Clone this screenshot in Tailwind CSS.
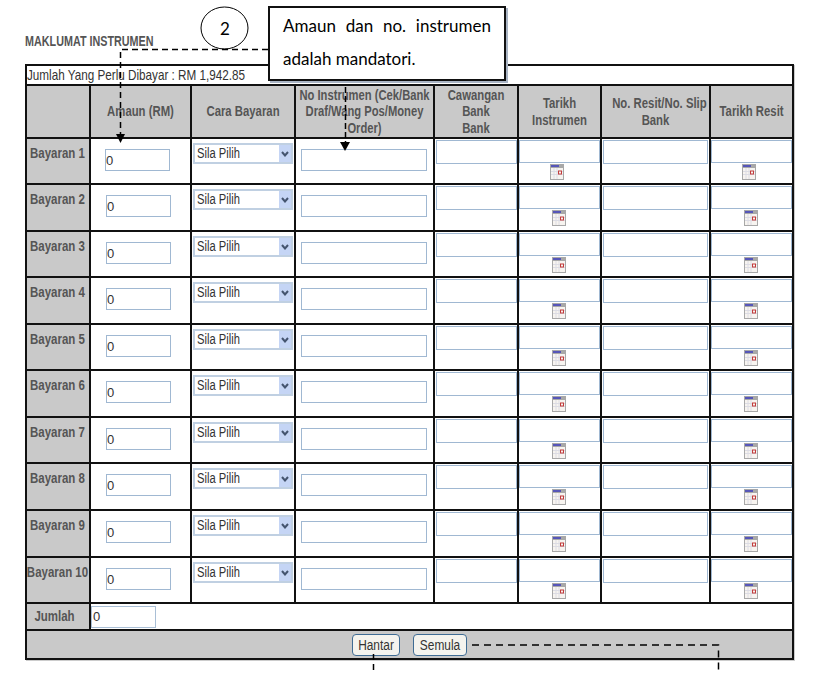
<!DOCTYPE html>
<html lang="en">
<head>
    <meta charset="UTF-8">
    <title>Maklumat Instrumen</title>
    <script src="https://cdn.jsdelivr.net/npm/@tailwindcss/browser@4"></script>
</head>
<body class="bg-white font-['Liberation_Sans',sans-serif] text-[#4a4a4a]">
    <main class="relative w-[821px] h-[673px] overflow-hidden pl-[25px] pt-[33px]">
        <h1 class="h-[31px] text-[14px] leading-[16px] font-bold text-[#555] whitespace-nowrap origin-left scale-x-[.77]">MAKLUMAT INSTRUMEN</h1>

        <table class="table-fixed border-collapse w-[767px] border-2 border-[#111] text-[14px] shadow-[1px_1px_0_#ccc]">
            <colgroup>
                <col class="w-[64px]"><col class="w-[101px]"><col class="w-[104px]"><col class="w-[139px]">
                <col class="w-[84px]"><col class="w-[83px]"><col class="w-[109px]"><col class="w-[83px]">
            </colgroup>
            <thead>
                <tr class="h-[20px]">
                    <td colspan="8" class="border-2 border-[#111] text-[15px] leading-[18px] text-[#333]">
                        <span class="block whitespace-nowrap origin-left scale-x-[.78]">Jumlah Yang Perlu Dibayar : RM 1,942.85</span>
                    </td>
                </tr>
                <tr class="h-[53px] bg-[#c9c9c9] text-center font-bold leading-[16.5px] text-[#555]">
                    <th class="border-2 border-[#111]"></th>
                    <th class="border-2 border-[#111]"><span class="block whitespace-nowrap scale-x-[.81]">Amaun (RM)</span></th>
                    <th class="border-2 border-[#111]"><span class="block whitespace-nowrap scale-x-[.81]">Cara Bayaran</span></th>
                    <th class="border-2 border-[#111]"><span class="block -mx-[20px] whitespace-nowrap scale-x-[.8]">No Instrumen (Cek/Bank<br>Draf/Wang Pos/Money<br>Order)</span></th>
                    <th class="border-2 border-[#111]"><span class="block whitespace-nowrap scale-x-[.81]">Cawangan<br>Bank<br>Bank</span></th>
                    <th class="border-2 border-[#111]"><span class="block whitespace-nowrap scale-x-[.81]">Tarikh<br>Instrumen</span></th>
                    <th class="border-2 border-[#111]"><span class="block whitespace-nowrap scale-x-[.81]">No. Resit/No. Slip<br>Bank</span></th>
                    <th class="border-2 border-[#111]"><span class="block whitespace-nowrap scale-x-[.81]">Tarikh Resit</span></th>
                </tr>
            </thead>
            <tbody id="rows"></tbody>
            <tfoot>
                <tr class="h-[27px]">
                    <td class="border-2 border-[#111] bg-[#c9c9c9] pr-[7px] text-center font-bold text-[#555]"><span class="block whitespace-nowrap scale-x-[.82]">Jumlah</span></td>
                    <td colspan="7" class="border-2 border-[#111]">
                        <input value="0" class="block w-[65px] h-[22px] border border-[#a9bfd6] px-[1px] text-[13px] text-[#333] outline-none">
                    </td>
                </tr>
                <tr class="h-[29px] bg-[#c9c9c9]">
                    <td colspan="8" class="border-2 border-[#111]">
                        <div class="flex justify-center gap-[13px] pr-[1px]">
                            <button class="w-[48px] h-[22px] rounded-[4px] border border-[#3f6c94] bg-[#f4f3ee] text-[14px] text-[#333]"><span class="block scale-x-[.85]">Hantar</span></button>
                            <button class="w-[54px] h-[22px] rounded-[4px] border border-[#3f6c94] bg-[#f4f3ee] text-[14px] text-[#333]"><span class="block scale-x-[.85]">Semula</span></button>
                        </div>
                    </td>
                </tr>
            </tfoot>
        </table>

        <!-- Annotations drawn over the form -->
        <svg class="absolute left-0 top-0 pointer-events-none" width="821" height="673" fill="none" stroke="#000">
            <ellipse cx="224.5" cy="28" rx="23.5" ry="21" stroke-width="1"/>
            <path d="M268 49.5H120.5V134" stroke-width="1.5" stroke-dasharray="6 4"/>
            <path d="M345.5 87V142" stroke-width="1.5" stroke-dasharray="6 3"/>
            <path d="M373.5 654V673" stroke-width="1.5" stroke-dasharray="6 4"/>
            <path d="M472 645H718.5V673" stroke-width="1.5" stroke-dasharray="7 5"/>
            <path d="M116 134H125L120.5 143Z" fill="#000" stroke="none"/>
            <path d="M340 142H350L345 151Z" fill="#000" stroke="none"/>
        </svg>
        <span class="absolute left-[220px] top-[19px] font-['Lato',sans-serif] text-[17px] leading-[20px] font-normal text-black">2</span>
        <div class="absolute left-[268px] top-[6px] w-[238px] h-[75px] border-2 border-[#111] bg-white px-[13px] pt-[1px] font-['Lato',sans-serif] text-[17px] leading-[33px] text-black shadow-[2px_2px_0_#a9b4c4]">
            <p class="flex justify-between"><span>Amaun</span><span>dan</span><span>no.</span><span>instrumen</span></p>
            <p>adalah mandatori.</p>
        </div>
    </main>

    <script>
        document.addEventListener('DOMContentLoaded', () => {
            const rows = document.getElementById('rows');
            const heights = [46, 47, 46, 47, 46, 47, 46, 47, 47, 46];
            const field = 'block border-[1.5px] border-[#a0b8d2] bg-white outline-none';
            const cell = 'border-2 border-[#111] align-top';

            const calendar = (left) => `
                <svg class="absolute top-[25px]" style="left:${left}px" width="14" height="16" viewBox="0 0 14 16">
                    <rect width="14" height="16" fill="#a8a8a8"/>
                    <rect x="1" y="4" width="12" height="11" fill="#f7f4f0"/>
                    <rect x="1" y="1" width="8" height="2" fill="#5656b8"/>
                    <path d="M1 7.5H13M1 10.5H13M4 4V15M7 4V15" stroke="#dcdce4"/>
                    <rect x="8.5" y="7" width="3" height="3" fill="#f7f4f0" stroke="#c23b3b"/>
                </svg>`;

            heights.forEach((height, i) => {
                const first = i === 0;
                rows.insertAdjacentHTML('beforeend', `
                    <tr style="height:${height}px">
                        <td class="${cell} bg-[#c9c9c9] pt-[4px] pr-[1px] text-center font-bold text-[#555]"><span class="block -mx-[10px] whitespace-nowrap scale-x-[.82]">Bayaran ${i + 1}</span></td>
                        <td class="${cell}"><div class="relative h-[40px]">
                            <input value="0" class="${field} absolute top-[10px] w-[65px] h-[22px] px-0 text-[13px] text-[#333]" style="left:${first ? 14 : 15}px">
                        </div></td>
                        <td class="${cell}"><div class="relative h-[40px]">
                            <div class="absolute left-[1px] top-[4px] w-[100px] h-[21px] border-2 border-[#c0d0e2] bg-white pl-[2px] text-[14px] leading-[16px] text-[#333]"><span class="block whitespace-nowrap origin-left scale-x-[.8]">Sila Pilih</span>
                                <span class="absolute right-0 top-0 w-[12px] h-[17px] flex items-center justify-center bg-[#c5d5f5]">
                                    <svg width="8" height="6" viewBox="0 0 8 6" fill="none" stroke="#44546f" stroke-width="2"><path d="M1 1L4 4.5L7 1"/></svg>
                                </span>
                            </div>
                        </div></td>
                        <td class="${cell}"><div class="relative h-[40px]">
                            <input class="${field} absolute left-[5px] top-[10px] w-[126px] h-[22px]">
                        </div></td>
                        <td class="${cell}"><div class="relative h-[40px]">
                            <input class="${field} absolute left-[1px] top-[1px] w-[81px] h-[24px]">
                        </div></td>
                        <td class="${cell}"><div class="relative h-[40px]">
                            <input class="${field} absolute left-0 top-[1px] w-[81px] h-[23px]">
                            ${calendar(first ? 31 : 33)}
                        </div></td>
                        <td class="${cell}"><div class="relative h-[40px]">
                            <input class="${field} absolute left-[1px] top-[1px] w-[105px] h-[24px]">
                        </div></td>
                        <td class="${cell}"><div class="relative h-[40px]">
                            <input class="${field} absolute left-0 top-[1px] w-[81px] h-[23px]">
                            ${calendar(first ? 31 : 33)}
                        </div></td>
                    </tr>`);
            });
        });
    </script>
</body>
</html>
